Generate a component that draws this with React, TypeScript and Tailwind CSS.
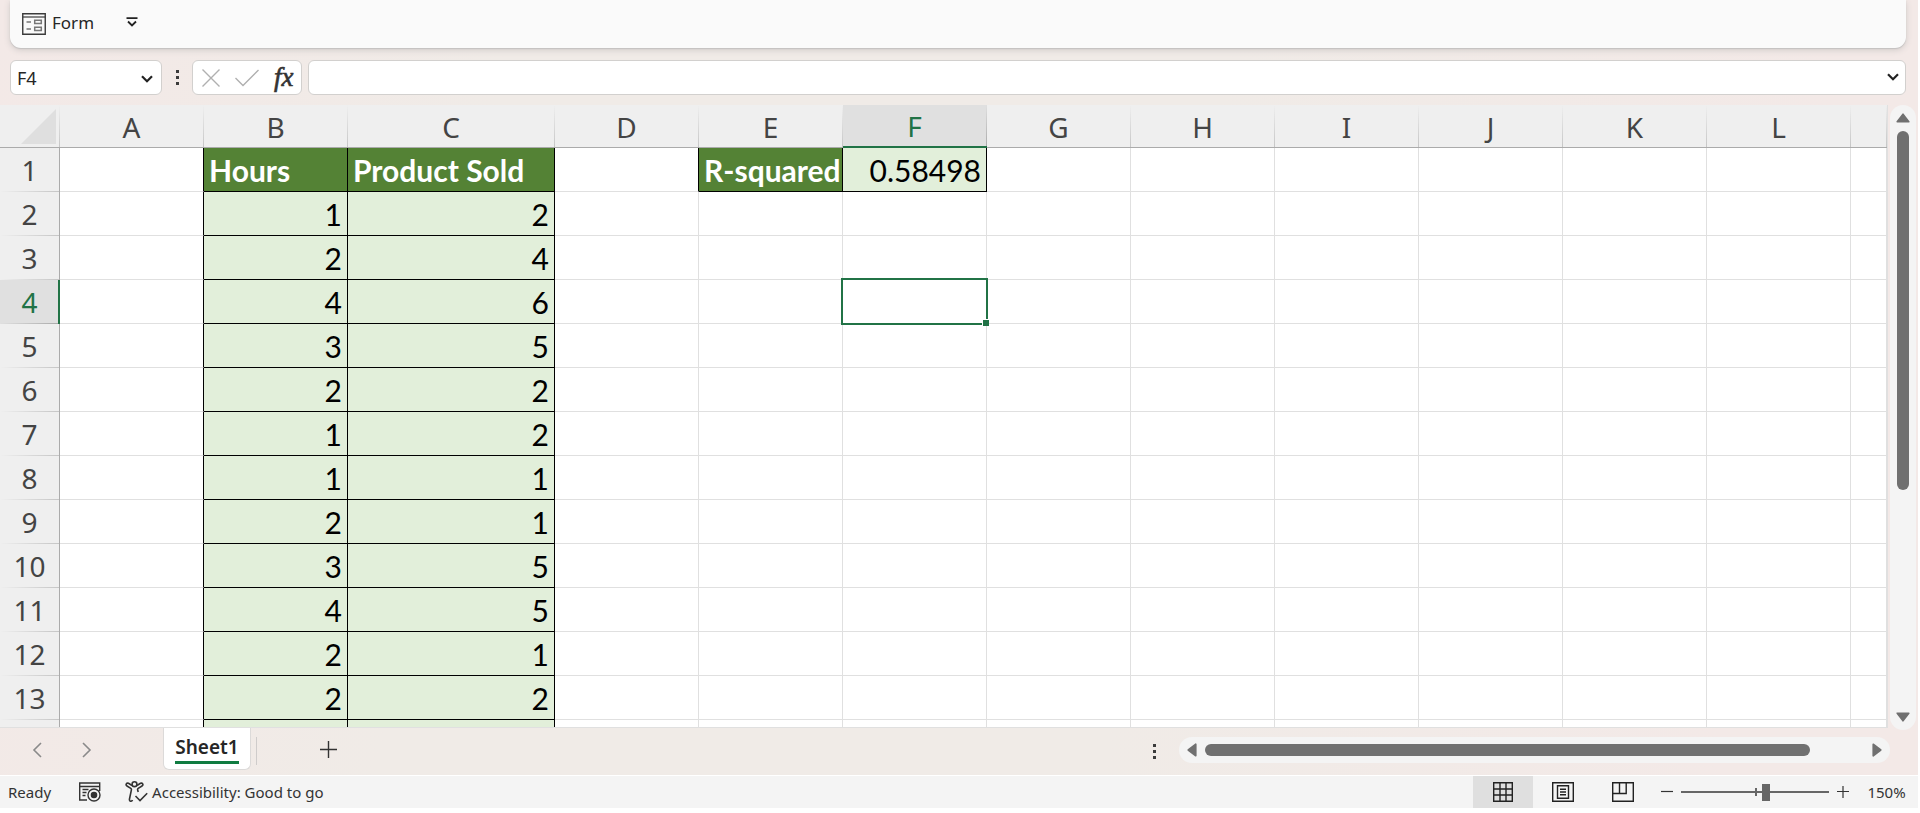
import { useState } from 'react'

interface Row {
  id: number
  b: string
  c: string
}

const COLUMNS = ['A', 'B', 'C', 'D', 'E', 'F', 'G', 'H', 'I', 'J', 'K', 'L', '']

const ROWS: Row[] = [
  { id: 1, b: 'Hours', c: 'Product Sold' },
  { id: 2, b: '1', c: '2' },
  { id: 3, b: '2', c: '4' },
  { id: 4, b: '4', c: '6' },
  { id: 5, b: '3', c: '5' },
  { id: 6, b: '2', c: '2' },
  { id: 7, b: '1', c: '2' },
  { id: 8, b: '1', c: '1' },
  { id: 9, b: '2', c: '1' },
  { id: 10, b: '3', c: '5' },
  { id: 11, b: '4', c: '5' },
  { id: 12, b: '2', c: '1' },
  { id: 13, b: '2', c: '2' },
  { id: 14, b: '', c: '' },
]

const LABEL_CELL = 'bg-[#548235] pr-0 font-bold text-white text-left border-black'
const VALUE_CELL = 'bg-[#e2efda] pr-[5px] text-black text-right border-black'

function Chevron({ className }: { className: string }) {
  return (
    <svg viewBox="0 0 12 8" className={className} fill="none" stroke="#222" strokeWidth="2.2">
      <path d="M1 1.2l5 5 5-5" />
    </svg>
  )
}

function Dots() {
  return (
    <span className="flex flex-col gap-[3px]">
      <span className="size-[3px] bg-[#3b3b3b]" />
      <span className="size-[3px] bg-[#3b3b3b]" />
      <span className="size-[3px] bg-[#3b3b3b]" />
    </span>
  )
}

function Ribbon() {
  return (
    <header className="mr-3 ml-[10px] flex h-12 items-start gap-8 rounded-b-[11px] bg-[#fafafa] pl-3 shadow-[0_1px_1px_#c4c1c0,0_2px_6px_#cfcac8]">
      <button className="mt-[7px] flex h-8 items-center gap-[6px] text-[17px] text-[#262626]">
        <svg viewBox="0 0 24 22" className="mt-[2px] h-[22px] w-6" fill="none" stroke="#3b3b3b">
          <path d="M.75.75h22.5v20.5H.75z" strokeWidth="1.4" />
          <path d="M.75 4h22.5" strokeWidth="1.2" />
          <path d="M4.5 9h4.5M4.5 16h4.5M12.7 7.2h6.6v3.4h-6.6zM12.7 14.2h6.6v3.4h-6.6z" stroke="#777" strokeWidth="1.5" />
        </svg>
        Form
      </button>
      <button aria-label="Customize toolbar" className="mt-[17px]">
        <svg viewBox="0 0 12 10" className="h-[10px] w-3" fill="none" stroke="#222" strokeWidth="1.8">
          <path d="M.5 1.2h11M2 4.5l4 4 4-4" />
        </svg>
      </button>
    </header>
  )
}

function FormulaBar() {
  const [formula, setFormula] = useState('')

  return (
    <div className="mt-3 flex h-[35px] pr-3 pl-[10px]">
      <div className="flex w-[152px] items-center rounded-md border border-[#d2d0ce] bg-white pr-2">
        <input
          aria-label="Name box"
          defaultValue="F4"
          className="w-0 flex-1 bg-transparent pl-[6px] text-lg text-[#262626] outline-none"
        />
        <button aria-label="Open name list">
          <Chevron className="mt-[3px] h-2 w-3" />
        </button>
      </div>
      <div className="flex w-[30px] items-center justify-center">
        <Dots />
      </div>
      <div className="flex w-[110px] items-center rounded-md border border-[#d2d0ce] bg-white pl-[9px]">
        <button aria-label="Cancel">
          <svg viewBox="0 0 18 18" className="size-[18px]" fill="none" stroke="#b0b0b0" strokeWidth="1.4">
            <path d="M.5.5l17 17M17.5.5l-17 17" />
          </svg>
        </button>
        <button aria-label="Enter" className="ml-[15px]">
          <svg viewBox="0 0 24 18" className="h-[18px] w-6" fill="none" stroke="#b0b0b0" strokeWidth="1.4">
            <path d="M.5 9l7.5 7.5L23.5 1" />
          </svg>
        </button>
        <button
          aria-label="Insert function"
          className="ml-[15px] pb-[2px] font-['Liberation_Serif',serif] text-[27px] leading-6 text-[#333] italic [-webkit-text-stroke:0.6px_#333]"
        >
          fx
        </button>
      </div>
      <div className="ml-[6px] flex flex-1 items-center rounded-md border border-[#d2d0ce] bg-white pr-[6px]">
        <input
          aria-label="Formula"
          value={formula}
          onChange={(e) => setFormula(e.target.value)}
          className="h-full flex-1 bg-transparent px-2 outline-none"
        />
        <button aria-label="Expand formula bar">
          <Chevron className="mb-[2px] h-2 w-3" />
        </button>
      </div>
    </div>
  )
}

function cellStyle(col: string, row: number) {
  if (col === 'B' || col === 'C') return row === 1 ? LABEL_CELL : VALUE_CELL
  if (row === 1 && col === 'E') return LABEL_CELL
  if (row === 1 && col === 'F') return VALUE_CELL
  // the cell on the left of a filled one shares its black edge
  if (col === 'A' || (col === 'D' && row === 1)) return 'border-b-[#e0e0e0] border-r-black'
  return 'border-[#e0e0e0]'
}

function cellText(col: string, row: Row) {
  if (col === 'B') return row.b
  if (col === 'C') return row.c
  if (row.id === 1 && col === 'E') return 'R-squared'
  if (row.id === 1 && col === 'F') return '0.58498'
  return ''
}

function Sheet() {
  return (
    <div className="h-[623px] flex-1 overflow-hidden border-r border-b border-[#e0e0e0] bg-white">
      <table className="w-full table-fixed border-separate border-spacing-0">
        <colgroup>
          <col className="w-[60px]" />
          {COLUMNS.map((col) => (
            <col key={col} className={col === 'C' ? 'w-[207px]' : col === '' ? '' : 'w-36'} />
          ))}
        </colgroup>
        <thead>
          <tr className="h-[43px] text-[28px] leading-8 text-[#444]">
            <th className="border-b border-[#ababab] bg-[#efefef] bg-[linear-gradient(to_bottom,#efefef,#c6c6c6)] bg-[length:1px_100%] bg-right bg-no-repeat p-0">
              <svg viewBox="0 0 35 35" className="ml-[21px] size-[35px]">
                <path d="M35 0v35H0z" fill="#dfdfdf" />
              </svg>
            </th>
            {COLUMNS.map((col) => (
              <th
                key={col}
                scope="col"
                className={
                  col === 'F'
                    ? 'border-b-2 border-[#217346] bg-[#e0e0e0] bg-[linear-gradient(to_bottom,#e0e0e0,#ababab)] bg-[length:1px_100%] bg-right bg-no-repeat pt-px pr-px pb-0 pl-0 font-normal text-[#217346]'
                    : 'border-b border-[#ababab] bg-[#efefef] bg-[linear-gradient(to_bottom,#efefef,#c6c6c6)] bg-[length:1px_100%] bg-right bg-no-repeat pt-px pr-px pb-0 pl-0 font-normal'
                }
              >
                {col}
              </th>
            ))}
          </tr>
        </thead>
        <tbody>
          {ROWS.map((row) => (
            <tr key={row.id} className="h-11 text-[28px] leading-8">
              <th
                scope="row"
                className={
                  row.id === 4
                    ? 'border-r-2 border-[#217346] bg-[#e0e0e0] bg-[linear-gradient(to_right,#e0e0e0,#ababab)] bg-[length:100%_1px] bg-bottom bg-no-repeat pt-0 pr-0 pb-px pl-px font-normal text-[#217346]'
                    : 'border-r border-[#ababab] bg-[#efefef] bg-[linear-gradient(to_right,#efefef,#c6c6c6)] bg-[length:100%_1px] bg-bottom bg-no-repeat p-0 pb-px font-normal text-[#444]'
                }
              >
                {row.id === 14 ? '' : row.id}
              </th>
              {COLUMNS.map((col) => (
                <td
                  key={col}
                  className={`relative border-r border-b py-0 pl-[5px] font-[Lato,sans-serif] text-3xl leading-8 whitespace-nowrap ${cellStyle(col, row.id)}`}
                >
                  {cellText(col, row)}
                  {col === 'F' && row.id === 4 && (
                    <span className="absolute -inset-[2px] z-10 border-2 border-[#217346]">
                      <span className="absolute -right-[3px] -bottom-[3px] size-[7px] border-t border-l border-white bg-[#217346]" />
                    </span>
                  )}
                </td>
              ))}
            </tr>
          ))}
        </tbody>
      </table>
    </div>
  )
}

function Arrow({ className }: { className: string }) {
  return (
    <svg viewBox="0 0 14 10" className={className}>
      <path d="M7 1.2L12.8 8.8H1.2z" fill="#707070" stroke="#707070" strokeWidth="1.6" strokeLinejoin="round" />
    </svg>
  )
}

function VerticalScroll() {
  return (
    <div className="mr-[2px] ml-[2px] flex h-[625px] w-[26px] flex-col items-center rounded-full bg-[#f4f4f4] py-2">
      <button aria-label="Scroll up">
        <Arrow className="h-[10px] w-[14px]" />
      </button>
      <div className="mt-2 h-[359px] w-3 rounded-full bg-[#707070]" />
      <button aria-label="Scroll down" className="mt-auto">
        <Arrow className="h-[10px] w-[14px] rotate-180" />
      </button>
    </div>
  )
}

function TabBar() {
  return (
    <div className="flex h-12 items-start border-b border-white">
      <nav aria-label="Sheets" className="flex flex-1 items-start">
        <button aria-label="Previous sheet" className="mt-[14px] ml-8">
          <svg viewBox="0 0 10 16" className="h-4 w-[10px]" fill="none" stroke="#8a8a8a" strokeWidth="1.6">
            <path d="M9 1L2 8l7 7" />
          </svg>
        </button>
        <button aria-label="Next sheet" className="mt-[14px] ml-10">
          <svg viewBox="0 0 10 16" className="h-4 w-[10px]" fill="none" stroke="#8a8a8a" strokeWidth="1.6">
            <path d="M1 1l7 7-7 7" />
          </svg>
        </button>
        <button className="ml-[71px] h-[42px] w-[88px] rounded-b-md border border-t-0 border-[#dcdad9] bg-white pt-[2px] text-[19px] leading-6 font-semibold text-[#262626]">
          <span className="inline-block border-b-[3px] border-[#107c41] pb-[2px]">Sheet1</span>
        </button>
        <span className="mt-[9px] ml-[5px] h-7 w-px bg-[#cfcccb]" />
        <button aria-label="New sheet" className="mt-[13px] ml-[63px]">
          <svg viewBox="0 0 17 17" className="size-[17px]" stroke="#333" strokeWidth="1.4">
            <path d="M8.5 0v17M0 8.5h17" />
          </svg>
        </button>
      </nav>
      <div className="mt-4 mr-[23px]">
        <Dots />
      </div>
      <div className="mt-[9px] mr-7 flex h-[26px] w-[711px] items-center rounded-full bg-[#f4f4f4] px-[6px]">
        <button aria-label="Scroll left">
          <Arrow className="h-[10px] w-[14px] -rotate-90" />
        </button>
        <div className="ml-[6px] h-3 w-[605px] rounded-full bg-[#707070]" />
        <button aria-label="Scroll right" className="ml-auto">
          <Arrow className="h-[10px] w-[14px] rotate-90" />
        </button>
      </div>
    </div>
  )
}

function StatusBar() {
  return (
    <footer className="flex h-8 items-center bg-[#f4f4f4] pl-2 text-[15px] text-[#333]">
      <span>Ready</span>
      <button aria-label="Record macro" className="ml-7">
        <svg viewBox="0 0 22 20" className="h-5 w-[22px]" fill="none" stroke="#333" strokeWidth="1.4">
          <path d="M8 18H.7V1h20v8M.7 4.5h20M3.5 7.5h6M3.5 10.5h4M3.5 13.5h3" />
          <circle cx="15" cy="13" r="6" />
          <circle cx="15" cy="13" r="2.6" fill="#333" />
        </svg>
      </button>
      <button className="ml-6 flex items-center gap-1">
        <svg viewBox="0 0 23 22" className="h-[22px] w-[23px]" fill="none" stroke="#333" strokeWidth="1.6">
          <circle cx="9.5" cy="3.2" r="2.4" />
          <path d="M7 4.5L3.5 2.3C1.5 1.5.2 4 2 5l3.8 2.4c.6.4.7.8.6 1.4L4.5 18c-.5 2.5 2.3 3 3 1M12 4.5l3.5-2.2c2-.8 3.3 1.7 1.5 2.7l-3.8 2.4c-.6.4-.7.8-.6 1.4l.6 2.2M10.5 15l4.5 4.5 7.2-7.2" />
        </svg>
        Accessibility: Good to go
      </button>
      <div className="ml-auto flex h-full items-center">
        <button aria-label="Normal view" className="flex h-full w-[60px] items-center justify-center bg-[#dfdfdf]">
          <svg viewBox="0 0 20 20" className="size-5" fill="none" stroke="#222" strokeWidth="1.4">
            <path d="M.7.7h18.6v18.6H.7zM.7 7h18.6M.7 13h18.6M7 .7v18.6M13 .7v18.6" />
          </svg>
        </button>
        <button aria-label="Page layout view" className="flex h-full w-[60px] items-center justify-center">
          <svg viewBox="0 0 22 20" className="h-5 w-[22px]" fill="none" stroke="#222" strokeWidth="1.4">
            <path d="M.7.7h20.6v18.6H.7zM5.5 3.7h11v12.6h-11zM8 7.2h6M8 10h6M8 12.8h6" />
          </svg>
        </button>
        <button aria-label="Page break view" className="flex h-full w-[60px] items-center justify-center">
          <svg viewBox="0 0 22 20" className="h-5 w-[22px]" fill="none" stroke="#222" strokeWidth="1.4">
            <path d="M.7.7h20.6v18.6H.7zM.7 11.5h13.5V.7M7.5.7v10.8" />
          </svg>
        </button>
        <button aria-label="Zoom out" className="ml-2">
          <svg viewBox="0 0 12 12" className="size-3" stroke="#333" strokeWidth="1.2">
            <path d="M0 5.5h12" />
          </svg>
        </button>
        <div className="relative mx-2 flex h-4 w-[148px] items-center">
          <input
            type="range"
            aria-label="Zoom"
            min={0}
            max={148}
            defaultValue={86}
            className="h-4 w-full appearance-none bg-[linear-gradient(#666,#666)] bg-[length:100%_2px] bg-center bg-no-repeat [&::-webkit-slider-thumb]:h-[17px] [&::-webkit-slider-thumb]:w-2 [&::-webkit-slider-thumb]:appearance-none [&::-webkit-slider-thumb]:bg-[#666]"
          />
          <span className="absolute top-1 left-1/2 h-2 w-[2px] bg-[#666]" />
        </div>
        <button aria-label="Zoom in">
          <svg viewBox="0 0 12 12" className="size-3" stroke="#333" strokeWidth="1.2">
            <path d="M0 5.5h12M6 0v12" />
          </svg>
        </button>
        <button className="w-[69px] pl-[6px]">150%</button>
      </div>
    </footer>
  )
}

export default function App() {
  return (
    <div className="min-h-screen bg-white pr-[2px] pb-[5px] font-['Noto_Sans',sans-serif]">
      <div className="bg-[linear-gradient(100deg,#f3e9e7_0%,#f0ebe7_25%,#f0ebe7_60%,#f3e9e7_90%)]">
        <Ribbon />
        <FormulaBar />
        <div className="mt-[10px] flex h-[623px] items-start">
          <Sheet />
          <VerticalScroll />
        </div>
        <TabBar />
        <StatusBar />
      </div>
    </div>
  )
}
